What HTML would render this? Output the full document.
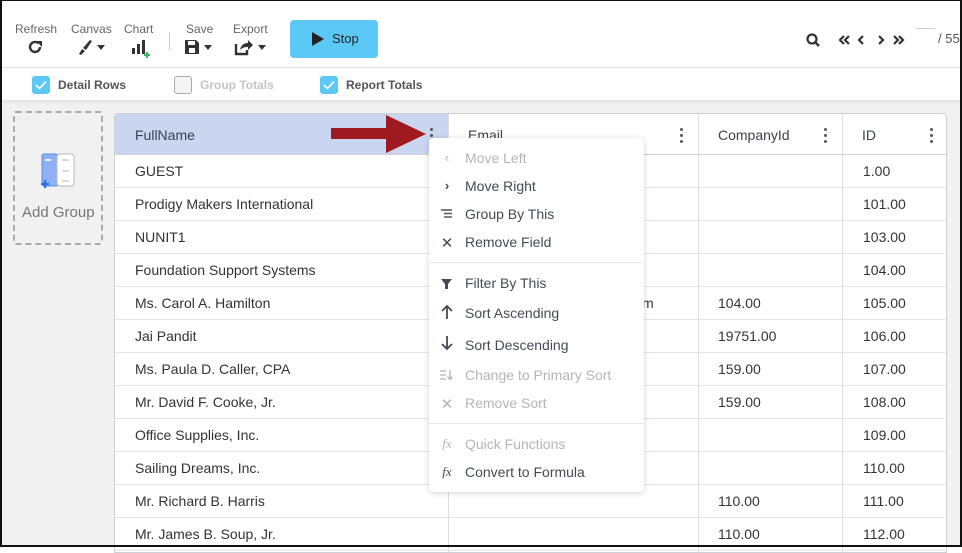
<!DOCTYPE html>
<html><head><meta charset="utf-8"><style>
*{box-sizing:border-box;margin:0;padding:0}
body{width:962px;height:547px;overflow:hidden;background:#fff;font-family:"Liberation Sans",Arial,sans-serif;position:relative}
.frame{position:absolute;inset:0;border:2px solid #111;border-top-width:1px;z-index:50;pointer-events:none}
.a{position:absolute}
.lbl{font-size:12px;color:#666;}
.tb-ic{color:#333}
.gray{position:absolute;left:0;top:101px;width:962px;height:446px;background:#f1f1f2}
.tbl{position:absolute;left:114px;top:113px;width:833px;height:440px;background:#fff;border:1px solid #cdd0d5;border-radius:4px 4px 0 0;overflow:hidden}
.row{position:absolute;left:0;width:833px;height:33px;border-bottom:1px solid #e3e4e7;font-size:14px;color:#333;line-height:32px}
.row span{position:absolute}
.vl{position:absolute;top:0;bottom:0;width:1px;background:#dcdde0}
.menu{position:absolute;left:429px;top:138px;width:215px;height:354px;background:#fff;border-radius:4px;box-shadow:0 1px 6px rgba(0,0,0,.18);z-index:10}
.mi{position:absolute;left:36px;font-size:14px;color:#444b55;white-space:nowrap}
.mi.d{color:#b3b5b9}
.ic{position:absolute;left:10px;width:16px;text-align:center;font-size:13px;color:#444b55}
.ic.d{color:#b3b5b9}
.sep{position:absolute;left:0;width:215px;height:1px;background:#e6e6e8}
.dots{position:absolute;width:4px}
.dots i{display:block;width:3px;height:3px;border-radius:50%;background:#555;margin:0 0 3px}
.cb{position:absolute;width:18px;height:18px;border-radius:3px}
</style></head><body>
<div class="frame"></div>
<!-- toolbar -->
<div class="a lbl" style="left:15px;top:22px">Refresh</div>
<div class="a lbl" style="left:71px;top:22px">Canvas</div>
<div class="a lbl" style="left:124px;top:22px">Chart</div>
<div class="a lbl" style="left:186px;top:22px">Save</div>
<div class="a lbl" style="left:233px;top:22px">Export</div>
<svg class="a" style="left:26px;top:38px" width="18" height="18" viewBox="0 0 18 18"><path d="M14 9a5 5 0 1 1-1.6-3.7" fill="none" stroke="#333" stroke-width="2.4"/><path d="M10 3h6v6z" fill="#333"/></svg>
<svg class="a" style="left:76px;top:38px" width="34" height="18"><path d="M3 16l3-5 3 2-4 4zM7 10l7-8 2 1-6 9z" fill="#333"/><path d="M21 7h8l-4 5z" fill="#333"/></svg>
<svg class="a" style="left:130px;top:38px" width="22" height="22"><rect x="2" y="10" width="3" height="6" fill="#333"/><rect x="7" y="6" width="3" height="10" fill="#333"/><rect x="12" y="2" width="3" height="14" fill="#333"/><path d="M14 17h6M17 14v6" stroke="#3cba5a" stroke-width="2"/></svg>
<div class="a" style="left:169px;top:32px;width:1px;height:18px;background:#ccc"></div>
<svg class="a" style="left:184px;top:39px" width="32" height="16"><path d="M1 1h11l3 3v11H1z" fill="#333"/><rect x="4" y="2" width="7" height="4" fill="#fff"/><rect x="5" y="9" width="6" height="5" fill="#fff"/><path d="M20 6h8l-4 5z" fill="#333"/></svg>
<svg class="a" style="left:234px;top:38px" width="34" height="18"><path d="M2 6v10h11v-4" fill="none" stroke="#333" stroke-width="2.4"/><path d="M6 12c1-5 4-7 8-7V2l5 5-5 5V9c-4 0-6 1-8 3z" fill="#333"/><path d="M24 7h8l-4 5z" fill="#333"/></svg>
<div class="a" style="left:290px;top:20px;width:88px;height:38px;background:#5bc8f5;border-radius:4px"></div>
<svg class="a" style="left:311px;top:32px" width="14" height="14"><path d="M1 0l12 7-12 7z" fill="#222"/></svg>
<div class="a" style="left:332px;top:31px;font-size:13px;color:#222">Stop</div>
<svg class="a" style="left:805px;top:32px" width="150" height="18"><circle cx="7" cy="7" r="4.5" fill="none" stroke="#333" stroke-width="2.2"/><path d="M10 10l4 4" stroke="#333" stroke-width="2.4"/><path d="M39 4l-4 4 4 4M44 4l-4 4 4 4M58 4l-4 4 4 4M74 4l4 4-4 4M89 4l4 4-4 4M94 4l4 4-4 4" fill="none" stroke="#333" stroke-width="2.2"/></svg>
<div class="a" style="left:916px;top:28px;width:19px;height:1px;background:#ccc"></div>
<div class="a" style="left:938px;top:31px;font-size:13px;color:#555">/ 55</div>
<div class="a" style="left:0;top:67px;width:962px;height:1px;background:#ddd"></div>
<!-- checkbox bar -->
<div class="cb" style="left:32px;top:76px;background:#5bc8f5"></div>
<svg class="a" style="left:35px;top:80px" width="12" height="10"><path d="M1 5l3.5 3.5L11 1.5" fill="none" stroke="#fff" stroke-width="1.8"/></svg>
<div class="a" style="left:58px;top:78px;font-size:12px;font-weight:bold;color:#555">Detail Rows</div>
<div class="cb" style="left:174px;top:76px;border:1px solid #aaa;background:#f4f4f4"></div>
<div class="a" style="left:200px;top:78px;font-size:12px;font-weight:bold;color:#c4c4c4">Group Totals</div>
<div class="cb" style="left:320px;top:76px;background:#5bc8f5"></div>
<svg class="a" style="left:323px;top:80px" width="12" height="10"><path d="M1 5l3.5 3.5L11 1.5" fill="none" stroke="#fff" stroke-width="1.8"/></svg>
<div class="a" style="left:346px;top:78px;font-size:12px;font-weight:bold;color:#555">Report Totals</div>
<div class="gray"></div>
<div class="a" style="left:0;top:100px;width:962px;height:4px;background:linear-gradient(#e2e2e4,#f1f1f2)"></div>
<!-- add group -->
<div class="a" style="left:13px;top:111px;width:90px;height:134px;border:2px dashed #a9abae;border-radius:3px"></div>
<svg class="a" style="left:40px;top:153px" width="38" height="36"><rect x="2" y="1" width="16" height="32" rx="2" fill="#8fb1f3" stroke="#5a8be8"/><rect x="17" y="1" width="17" height="32" rx="3" fill="#fff" stroke="#b6b8bb"/><path d="M5 7h6M22 7h7M22 18h7M22 28h7M22 13h0" stroke="#ccc" stroke-width="1.6"/><path d="M5 7h6" stroke="#fff" stroke-width="1.6"/><path d="M1 31h8M5 27v8" stroke="#2a6ee8" stroke-width="2.2"/></svg>
<div class="a" style="left:22px;top:204px;font-size:15px;color:#777">Add Group</div>
<!-- table -->
<div class="tbl">
 <div class="a" style="left:0;top:0;width:333px;height:41px;background:#cad6ef"></div>
 <div class="row" style="top:0;height:41px;line-height:42px;border-bottom:1px solid #cdd0d5"><span style="left:20px;color:#3a4250">FullName</span><span style="left:353px;color:#3a4250">Email</span><span style="left:603px;color:#3a4250">CompanyId</span><span style="left:747px;color:#3a4250">ID</span></div>
 <div class="vl" style="left:333px"></div><div class="vl" style="left:583px"></div><div class="vl" style="left:727px"></div>
 <div class="dots" style="left:315px;top:14px"><i></i><i></i><i></i></div>
 <div class="dots" style="left:565px;top:14px"><i></i><i></i><i></i></div>
 <div class="dots" style="left:709px;top:14px"><i></i><i></i><i></i></div>
 <div class="dots" style="left:815px;top:14px"><i></i><i></i><i></i></div>
 <div class="row" style="top:41px"><span style="left:20px">GUEST</span><span style="left:748px">1.00</span></div>
 <div class="row" style="top:74px"><span style="left:20px">Prodigy Makers International</span><span style="left:748px">101.00</span></div>
 <div class="row" style="top:107px"><span style="left:20px">NUNIT1</span><span style="left:748px">103.00</span></div>
 <div class="row" style="top:140px"><span style="left:20px">Foundation Support Systems</span><span style="left:748px">104.00</span></div>
 <div class="row" style="top:173px"><span style="left:20px">Ms. Carol A. Hamilton</span><span style="left:527px">m</span><span style="left:603px">104.00</span><span style="left:748px">105.00</span></div>
 <div class="row" style="top:206px"><span style="left:20px">Jai Pandit</span><span style="left:603px">19751.00</span><span style="left:748px">106.00</span></div>
 <div class="row" style="top:239px"><span style="left:20px">Ms. Paula D. Caller, CPA</span><span style="left:603px">159.00</span><span style="left:748px">107.00</span></div>
 <div class="row" style="top:272px"><span style="left:20px">Mr. David F. Cooke, Jr.</span><span style="left:603px">159.00</span><span style="left:748px">108.00</span></div>
 <div class="row" style="top:305px"><span style="left:20px">Office Supplies, Inc.</span><span style="left:748px">109.00</span></div>
 <div class="row" style="top:338px"><span style="left:20px">Sailing Dreams, Inc.</span><span style="left:748px">110.00</span></div>
 <div class="row" style="top:371px"><span style="left:20px">Mr. Richard B. Harris</span><span style="left:603px">110.00</span><span style="left:748px">111.00</span></div>
 <div class="row" style="top:404px"><span style="left:20px">Mr. James B. Soup, Jr.</span><span style="left:603px">110.00</span><span style="left:748px">112.00</span></div>
</div>
<!-- arrow -->
<svg class="a" style="left:330px;top:113px;z-index:11" width="98" height="42"><path d="M1 15h55V2l40 19-40 19V26H1z" fill="#9e1a20"/></svg>
<!-- menu -->
<div class="menu">
 <div class="ic d" style="top:12px">‹</div><div class="mi d" style="top:12px">Move Left</div>
 <div class="ic" style="top:40px;font-weight:bold">›</div><div class="mi" style="top:40px">Move Right</div>
 <svg class="a" style="left:12px;top:71px" width="12" height="10"><path d="M0 1h11M3 4.5h8M3 8h8" stroke="#555" stroke-width="1.4"/></svg><div class="mi" style="top:68px">Group By This</div>
 <div class="ic" style="top:96px;font-size:15px">✕</div><div class="mi" style="top:96px">Remove Field</div>
 <div class="sep" style="top:124px"></div>
 <svg class="a" style="left:12px;top:140px" width="12" height="12"><path d="M0 1h11L7 6v5H4V6z" fill="#444b55"/></svg><div class="mi" style="top:137px">Filter By This</div>
 <svg class="a" style="left:12px;top:167px" width="12" height="14"><path d="M6 14V2M1 6l5-5 5 5" fill="none" stroke="#444b55" stroke-width="1.8"/></svg><div class="mi" style="top:167px">Sort Ascending</div>
 <svg class="a" style="left:12px;top:198px" width="12" height="14"><path d="M6 0v12M1 8l5 5 5-5" fill="none" stroke="#444b55" stroke-width="1.8"/></svg><div class="mi" style="top:199px">Sort Descending</div>
 <svg class="a" style="left:11px;top:231px" width="14" height="12"><path d="M0 2h6M0 6h6M0 10h6M10 1v9M7.5 7.5l2.5 3 2.5-3" fill="none" stroke="#b3b5b9" stroke-width="1.3"/></svg><div class="mi d" style="top:229px">Change to Primary Sort</div>
 <div class="ic d" style="top:257px;font-size:15px">✕</div><div class="mi d" style="top:257px">Remove Sort</div>
 <div class="sep" style="top:285px"></div>
 <div class="ic d" style="top:298px;font-family:'Liberation Serif',serif;font-style:italic">fx</div><div class="mi d" style="top:298px">Quick Functions</div>
 <div class="ic" style="top:326px;font-family:'Liberation Serif',serif;font-style:italic">fx</div><div class="mi" style="top:326px">Convert to Formula</div>
</div>
</body></html>
